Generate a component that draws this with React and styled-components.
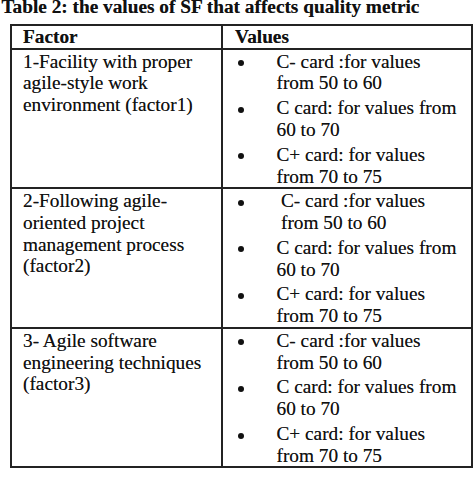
import React from 'react';
import styled, { createGlobalStyle } from 'styled-components';

const GlobalStyle = createGlobalStyle`
  html, body {
    margin: 0;
    padding: 0;
    background: #ffffff;
  }
  body {
    font-family: "Liberation Serif", "Times New Roman", serif;
    color: #111111;
    overflow: hidden;
  }
`;

const serif = `"Liberation Serif", "Times New Roman", serif`;

const StyledPage = styled.div`
  width: 474px;
  height: 486px;
  overflow: hidden;
  text-shadow: 0 0 0.6px rgba(0, 0, 0, 0.55);
`;

const StyledCaption = styled.div`
  margin: -4px 0 0;
  padding-left: 1.5px;
  font-family: ${serif};
  font-size: 19.3px;
  line-height: 21.7px;
  font-weight: bold;
  white-space: nowrap;
`;

const StyledTable = styled.table`
  margin: 6.3px 0 0 10px;
  width: 463px;
  table-layout: fixed;
  border-collapse: collapse;
  font-family: ${serif};
  font-size: 19.3px;
  line-height: 21.7px;
  color: #111111;
`;

const StyledHeadCell = styled.th`
  border: 2px solid #232323;
  padding: 0 8px 0 ${({ wide }) => (wide ? '12px' : '11px')};
  text-align: left;
  font-weight: bold;
  vertical-align: top;
`;

const StyledCell = styled.td`
  border: 2px solid #232323;
  padding: 1px ${({ wide }) => (wide ? '12px' : '8px')} 0 ${({ wide }) => (wide ? '12px' : '11px')};
  vertical-align: top;
`;

const StyledList = styled.ul`
  list-style: none;
  margin: 0;
  padding: 0;
`;

const StyledItem = styled.li`
  display: flex;
  & + & {
    margin-top: 3.2px;
  }
`;

const StyledBullet = styled.span`
  flex: 0 0 41.5px;

  &::before {
    content: '';
    display: block;
    width: 6px;
    height: 6px;
    margin: 9.5px 0 0 3.3px;
    border-radius: 50%;
    background: #111111;
  }
`;

const StyledItemText = styled.span`
  flex: 1;
  padding-left: ${({ indent }) => (indent ? '4.5px' : '0')};
`;

const items = [
  'C- card :for values from 50 to 60',
  'C card: for values from 60 to 70',
  'C+ card: for values from 70 to 75',
];

const rows = [
  { factor: '1-Facility with proper agile-style work environment (factor1)' },
  { factor: '2-Following agile-oriented project management process (factor2)', indentFirst: true },
  { factor: '3- Agile software engineering techniques (factor3)' },
];

const App = () => (
  <StyledPage>
    <GlobalStyle />
    <StyledCaption>Table 2: the values of SF that affects quality metric</StyledCaption>
    <StyledTable>
      <colgroup>
        <col style={{ width: '211px' }} />
        <col />
      </colgroup>
      <thead>
        <tr>
          <StyledHeadCell>Factor</StyledHeadCell>
          <StyledHeadCell wide>Values</StyledHeadCell>
        </tr>
      </thead>
      <tbody>
        {rows.map(({ factor, indentFirst }) => (
          <tr key={factor}>
            <StyledCell>{factor}</StyledCell>
            <StyledCell wide>
              <StyledList>
                {items.map((item, i) => (
                  <StyledItem key={item}>
                    <StyledBullet />
                    <StyledItemText indent={indentFirst && i === 0}>{item}</StyledItemText>
                  </StyledItem>
                ))}
              </StyledList>
            </StyledCell>
          </tr>
        ))}
      </tbody>
    </StyledTable>
  </StyledPage>
);

export default App;
